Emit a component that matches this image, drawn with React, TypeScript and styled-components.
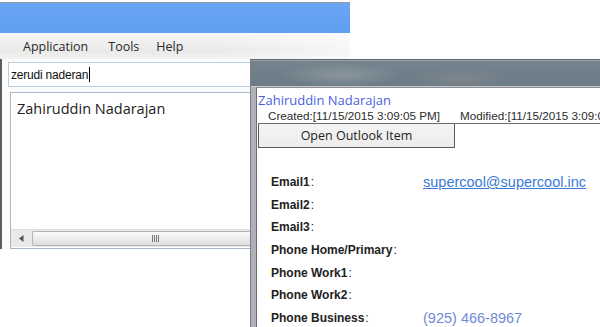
import React from "react";
import styled, { createGlobalStyle } from "styled-components";

const Global = createGlobalStyle`
  html, body { margin: 0; padding: 0; background: #ffffff; }
  body { width: 600px; height: 327px; overflow: hidden; font-family: "Open Sans", "Liberation Sans", sans-serif; }
`;

const Desktop = styled.div`
  position: relative;
  width: 600px;
  height: 327px;
  overflow: hidden;
  background: #ffffff;
`;

const MainWindow = styled.div`
  position: absolute;
  left: 0;
  top: 2px;
  width: 350px;
  height: 246px;
  display: flex;
  flex-direction: column;
  border-top: 1px solid #9a9a9a;
`;

const BlueTitle = styled.div`
  height: 30px;
  background: linear-gradient(180deg, #6aa6f4 0%, #5f9ef1 100%);
`;

const MenuBar = styled.div`
  height: 26px;
  display: flex;
  align-items: center;
  padding-left: 16px;
  background:
    linear-gradient(90deg, rgba(255,255,255,0) 60%, rgba(255,255,255,0.6) 100%),
    linear-gradient(180deg, #f6f6f6 0%, #e9e9e9 70%, #f2f2f2 100%);
`;

const MenuItem = styled.span<{ gap?: number }>`
  font-family: "Open Sans", sans-serif;
  font-size: 12.5px;
  color: #2a2a2a;
  padding: 0 7px;
  margin-right: ${(p) => p.gap ?? 0}px;
`;

const MainBody = styled.div`
  flex: 1;
  display: flex;
  flex-direction: column;
  gap: 5px;
  padding: 3px 0 0 8px;
  border-left: 2px solid #5e5e5e;
  background: #fbfbfb;
`;

const SearchBox = styled.div`
  height: 23px;
  margin-left: -2px;
  border: 1px solid #b9cde0;
  background: #ffffff;
  display: flex;
  align-items: center;
  padding-left: 2px;
  font-family: "Liberation Sans", sans-serif;
  font-size: 12px;
  letter-spacing: -0.2px;
  color: #111;
`;

const Caret = styled.span`
  display: inline-block;
  width: 1px;
  height: 15px;
  background: #000;
  margin-left: 1px;
`;

const ListBox = styled.div`
  flex: 1;
  display: flex;
  flex-direction: column;
  border: 1px solid #a9b8c8;
  border-right: none;
  background: #ffffff;
`;

const ListItems = styled.div`
  flex: 1;
  padding: 6px 0 0 6px;
`;

const ListItem = styled.div`
  font-family: "Open Sans", sans-serif;
  font-size: 14.5px;
  color: #222;
`;

const HScroll = styled.div`
  height: 17px;
  margin-bottom: 1px;
  display: flex;
  background: #e9e9e9;
  border-top: 1px solid #dedede;
`;

const ArrowBtn = styled.div`
  width: 21px;
  display: flex;
  align-items: center;
  justify-content: center;
`;

const Thumb = styled.div`
  flex: 1;
  margin: 1px 0;
  border: 1px solid #b4b4b4;
  border-right: none;
  border-radius: 2px 0 0 2px;
  background: linear-gradient(180deg, #fafafa 0%, #ececec 50%, #dedede 100%);
  display: flex;
  align-items: center;
  padding-left: 119px;
`;

const Grip = styled.div`
  display: flex;
  gap: 1px;
`;

const GripLine = styled.span`
  width: 1px;
  height: 7px;
  background: #777;
`;

const DetailWindow = styled.div`
  position: absolute;
  left: 250px;
  top: 59px;
  width: 360px;
  height: 280px;
  display: flex;
  flex-direction: column;
  background: #b7bbbf;
  border-left: 1px solid #7a7f85;
  border-top: 1px solid #5f666c;
`;

const DarkTitle = styled.div`
  height: 25px;
  border-top: 1px solid #9aa2a8;
  border-bottom: 1px solid #c9cdd0;
  background:
    radial-gradient(ellipse 60px 12px at 90px 14px, rgba(170,178,184,0.45), transparent),
    radial-gradient(ellipse 50px 10px at 210px 18px, rgba(160,150,150,0.35), transparent),
    linear-gradient(180deg, #75848e 0%, #6f7f89 50%, #6c7b85 100%);
`;

const Frame = styled.div`
  flex: 1;
  display: flex;
  padding-left: 5px;
  background: linear-gradient(90deg, #aeb2b6, #c4c7ca);
`;

const Content = styled.div`
  flex: 1;
  min-width: 0;
  overflow: hidden;
  background: #ffffff;
  border-left: 1px solid #6a6e72;
  border-top: 1px solid #8a8e92;
  display: flex;
  flex-direction: column;
  padding-left: 1px;
`;

const ContactName = styled.div`
  font-family: "Open Sans", sans-serif;
  font-size: 13px;
  color: #4c5fe0;
  padding-top: 4px;
  line-height: 17px;
  white-space: nowrap;
`;

const MetaLine = styled.div`
  font-family: "Liberation Sans", sans-serif;
  font-size: 11.7px;
  color: #2c2c2c;
  padding-left: 10px;
  line-height: 14px;
  white-space: nowrap;
  border-bottom: 1px solid #6d6d6d;
`;

const MetaPart = styled.span<{ gapLeft?: number }>`
  margin-left: ${(p) => p.gapLeft ?? 0}px;
`;

const OpenButton = styled.button`
  width: 197px;
  height: 24px;
  margin: 0;
  padding: 0;
  border: 1px solid #5a5a5a;
  border-top: none;
  background: linear-gradient(180deg, #f4f4f4 0%, #ececec 100%);
  font-family: "Open Sans", sans-serif;
  font-size: 12.5px;
  color: #1e1e1e;
  text-align: center;
`;

const Fields = styled.div`
  display: grid;
  grid-template-columns: 152px 1fr;
  grid-auto-rows: 22.6px;
  align-items: center;
  padding: 23px 0 0 13px;
`;

const Label = styled.div`
  font-family: "Liberation Sans", sans-serif;
  font-weight: bold;
  font-size: 12px;
  color: #222;
  white-space: nowrap;
`;

const Colon = styled.span`
  font-weight: normal;
  margin-left: 1px;
`;

const Value = styled.div<{ link?: boolean }>`
  font-family: "Liberation Sans", sans-serif;
  font-size: 14.5px;
  color: ${(p) => (p.link ? "#3a7ad6" : "#6f89d8")};
  text-decoration: ${(p) => (p.link ? "underline" : "none")};
  white-space: nowrap;
`;

const fields: { label: string; value?: string; link?: boolean }[] = [
  { label: "Email1", value: "supercool@supercool.inc", link: true },
  { label: "Email2" },
  { label: "Email3" },
  { label: "Phone Home/Primary" },
  { label: "Phone Work1" },
  { label: "Phone Work2" },
  { label: "Phone Business", value: "(925) 466-8967" },
];

export default function App() {
  return (
    <Desktop>
      <Global />
      <MainWindow>
        <BlueTitle />
        <MenuBar>
          <MenuItem gap={6}>Application</MenuItem>
          <MenuItem gap={3}>Tools</MenuItem>
          <MenuItem>Help</MenuItem>
        </MenuBar>
        <MainBody>
          <SearchBox>
            zerudi naderan
            <Caret />
          </SearchBox>
          <ListBox>
            <ListItems>
              <ListItem>Zahiruddin Nadarajan</ListItem>
            </ListItems>
            <HScroll>
              <ArrowBtn>
                <svg width="5" height="7" viewBox="0 0 5 7">
                  <path d="M4.5 0 L0 3.5 L4.5 7 Z" fill="#555" />
                </svg>
              </ArrowBtn>
              <Thumb>
                <Grip>
                  <GripLine />
                  <GripLine />
                  <GripLine />
                  <GripLine />
                </Grip>
              </Thumb>
            </HScroll>
          </ListBox>
        </MainBody>
      </MainWindow>

      <DetailWindow>
        <DarkTitle />
        <Frame>
          <Content>
            <ContactName>Zahiruddin Nadarajan</ContactName>
            <MetaLine>
              <MetaPart>Created:[11/15/2015 3:09:05 PM]</MetaPart>
              <MetaPart gapLeft={20}>Modified:[11/15/2015 3:09:05 PM]</MetaPart>
            </MetaLine>
            <OpenButton>Open Outlook Item</OpenButton>
            <Fields>
              {fields.map((f) => (
                <React.Fragment key={f.label}>
                  <Label>
                    {f.label}
                    <Colon>:</Colon>
                  </Label>
                  <Value link={f.link}>{f.value ?? ""}</Value>
                </React.Fragment>
              ))}
            </Fields>
          </Content>
        </Frame>
      </DetailWindow>
    </Desktop>
  );
}
